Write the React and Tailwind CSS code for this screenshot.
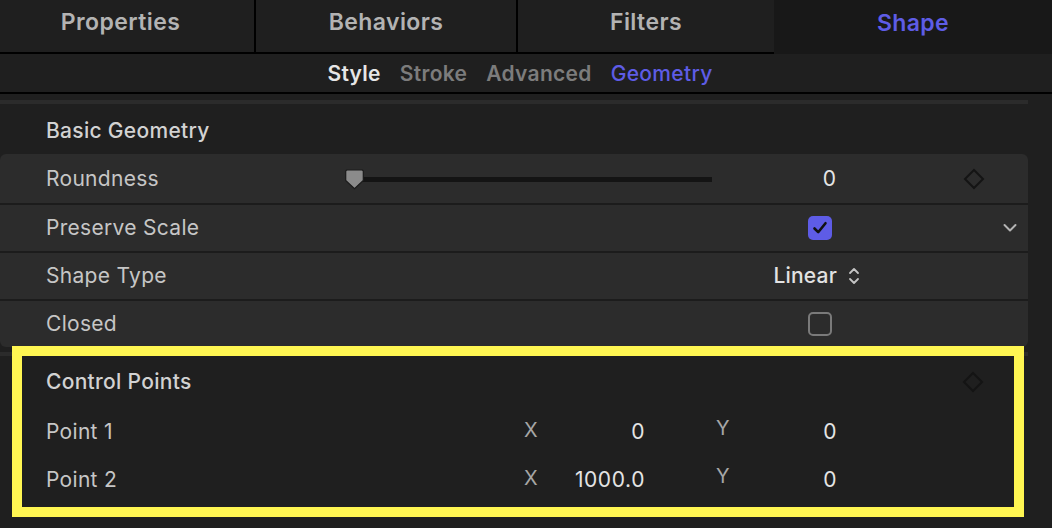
import React from 'react';

const Diamond = () => (
    <svg width="22" height="22" viewBox="0 0 22 22" className="block">
        <path d="M11 2 L20 11 L11 20 L2 11 Z" fill="none" stroke="#141414" strokeWidth="2" />
    </svg>
);

const SliderThumb = () => (
    <svg width="19" height="21" viewBox="0 0 19 21" className="block relative z-10">
        <path
            d="M2.5 0.8 H16.5 A1.8 1.8 0 0 1 18.3 2.6 V11.5 L9.5 19.8 L0.7 11.5 V2.6 A1.8 1.8 0 0 1 2.5 0.8 Z"
            fill="#8b8b8b"
            stroke="#1a1a1a"
            strokeWidth="1.2"
        />
    </svg>
);

const UpDown = () => (
    <svg width="12" height="20" viewBox="0 0 12 20" className="block">
        <path d="M2 7 L6 3 L10 7" fill="none" stroke="#c4c4c4" strokeWidth="1.8" strokeLinecap="round" strokeLinejoin="round" />
        <path d="M2 13 L6 17 L10 13" fill="none" stroke="#c4c4c4" strokeWidth="1.8" strokeLinecap="round" strokeLinejoin="round" />
    </svg>
);

const ChevronDown = () => (
    <svg width="14" height="10" viewBox="0 0 14 10" className="block">
        <path d="M1.5 2 L7 7.5 L12.5 2" fill="none" stroke="#b4b4b4" strokeWidth="2" strokeLinecap="round" strokeLinejoin="round" />
    </svg>
);

const tabs = [
    { name: 'Properties', cls: 'w-[256px] border-r-2 border-b-2 border-black pr-[13px] text-[#b3b3b3]' },
    { name: 'Behaviors', cls: 'w-[262px] border-r-2 border-b-2 border-black text-[#b3b3b3]' },
    { name: 'Filters', cls: 'w-[256px] border-b-2 border-black text-[#b3b3b3]' },
    { name: 'Shape', cls: 'flex-1 bg-[#181818] text-[#5e5ce6]' },
];

const Row = ({ label, first, children, value, tail }) => (
    <div className={`flex items-center h-[48px] ${first ? '' : 'border-t-2 border-[#1c1c1c]'}`}>
        <div className="w-[345px] pl-[46px] text-[21px] tracking-[0.3px] text-[#c6c6c6]">{label}</div>
        <div className="w-[367px] flex items-center">{children}</div>
        <div className="w-[125px] flex items-center justify-end">{value}</div>
        <div className="flex-1 flex items-center">{tail}</div>
    </div>
);

const PointRow = ({ label, x, y }) => (
    <div className="flex items-center h-[48px]">
        <div className="w-[524px] pl-[46px] text-[21px] tracking-[0.3px] text-[#c6c6c6]">{label}</div>
        <div className="w-[14px] text-[20px] text-[#a6a6a6] -translate-y-[2px]">X</div>
        <div className="w-[107px] text-right text-[21px] tracking-[0.6px] text-[#e4e4e4]">{x}</div>
        <div className="w-[71px]"></div>
        <div className="w-[14px] text-[20px] text-[#a6a6a6] -translate-y-[4px]">Y</div>
        <div className="w-[107px] text-right text-[21px] tracking-[0.6px] text-[#e4e4e4]">{y}</div>
    </div>
);

const App = () => {
    return (
        <div className="relative w-[1052px] h-[528px] overflow-hidden bg-[#1f1f1f] font-['Inter',sans-serif]">
            {/* Onglets */}
            <div className="flex h-[54px]">
                {tabs.map(t => (
                    <div key={t.name} className={`flex items-center justify-center pb-[8px] text-[23px] tracking-[0.4px] font-semibold ${t.cls}`}>
                        {t.name}
                    </div>
                ))}
            </div>

            {/* Sous-onglets */}
            <div className="flex items-center justify-center gap-[19px] h-[40px] pr-[12px] pt-[2px] border-b-2 border-black text-[21px] tracking-[0.3px] font-semibold">
                <span className="text-[#e6e6e6]">Style</span>
                <span className="text-[#7c7c7c]">Stroke</span>
                <span className="text-[#7c7c7c]">Advanced</span>
                <span className="text-[#5e5ce6] font-medium">Geometry</span>
            </div>

            <div className="h-[6px]"></div>
            <div className="w-[1028px] h-[4px] bg-[#2b2b2b]"></div>

            <div className="h-[50px] flex items-center pl-[46px] pt-[3px] text-[21px] tracking-[0.3px] font-medium text-[#d2d2d2]">Basic Geometry</div>

            <div className="w-[1028px] rounded-[6px] bg-[#2c2c2c] pt-[1px]">
                <Row
                    first
                    label="Roundness"
                    value={<span className="text-[21px] text-[#e6e6e6] pr-[1px]">0</span>}
                    tail={<div className="ml-[126px]"><Diamond /></div>}
                >
                    <SliderThumb />
                    <div className="flex-1 h-[5px] -ml-[4px] bg-[#141414]"></div>
                </Row>
                <Row
                    label="Preserve Scale"
                    value={
                        <div className="mr-[5px] w-[24px] h-[24px] rounded-[5px] bg-[#5e5ce6] flex items-center justify-center">
                            <svg width="18" height="18" viewBox="0 0 18 18" className="block">
                                <path d="M3.5 9.5 L7.2 13.2 L14.5 4.2" fill="none" stroke="#111" strokeWidth="2.6" strokeLinecap="round" strokeLinejoin="round" />
                            </svg>
                        </div>
                    }
                    tail={<div className="ml-[166px]"><ChevronDown /></div>}
                />
                <Row
                    label="Shape Type"
                    value={<span className="text-[21px] tracking-[0.2px] font-medium text-[#e2e2e2]">Linear</span>}
                    tail={<div className="ml-[11px]"><UpDown /></div>}
                />
                <Row
                    label="Closed"
                    value={<div className="mr-[5px] w-[24px] h-[24px] rounded-[5px] border-2 border-[#7a7a7a]"></div>}
                />
            </div>

            <div className="h-[5px]"></div>
            <div className="w-[1028px] h-[4px] bg-[#2b2b2b]"></div>

            <div className="flex items-center h-[52px]">
                <div className="w-[962px] pl-[46px] text-[21px] tracking-[0.3px] font-medium text-[#d2d2d2]">Control Points</div>
                <Diamond />
            </div>
            <PointRow label="Point 1" x="0" y="0" />
            <PointRow label="Point 2" x="1000.0" y="0" />

            {/* Cadre jaune d'annotation */}
            <div className="absolute left-[12px] top-[346px] w-[1012px] h-[171px] border-[10px] border-[#fff652] pointer-events-none"></div>
        </div>
    );
};

export default App;
